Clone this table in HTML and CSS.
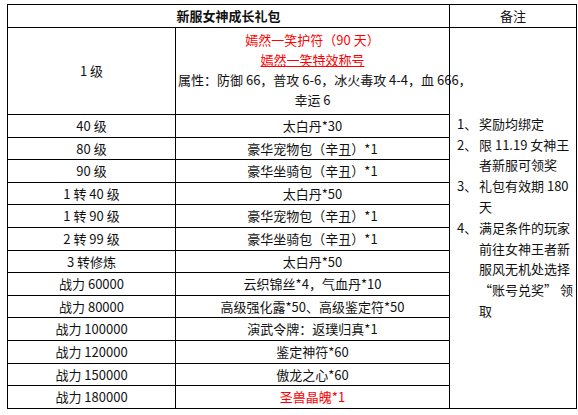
FILE: index.html
```html
<!DOCTYPE html>
<html lang="zh">
<head>
<meta charset="utf-8">
<link rel="stylesheet" href="styles.css">
</head>
<body>
<table class="gift">
  <colgroup>
    <col class="c1"><col class="c2"><col class="c3">
  </colgroup>
  <tr class="head">
    <th colspan="2" class="title">新服女神成长礼包</th>
    <th class="note-head">备注</th>
  </tr>
  <tr>
    <td>1 级</td>
    <td class="multi">
      <div class="red">嫣然一笑护符（90 天）</div>
      <div class="red ul">嫣然一笑特效称号</div>
      <div class="nw">属性：防御 66，普攻 6-6，冰火毒攻 4-4，血 666，</div>
      <div>幸运 6</div>
    </td>
    <td rowspan="15" class="notes">
      <div class="item"><span class="num">1、</span><span class="txt">奖励均绑定</span></div>
      <div class="item"><span class="num">2、</span><span class="txt">限 11.19 女神王<br>者新服可领奖</span></div>
      <div class="item"><span class="num">3、</span><span class="txt">礼包有效期 180<br>天</span></div>
      <div class="item"><span class="num">4、</span><span class="txt">满足条件的玩家<br>前往女神王者新<br>服风无机处选择<br>“账号兑奖” 领<br>取</span></div>
    </td>
  </tr>
  <tr><td>40 级</td><td>太白丹*30</td></tr>
  <tr><td>80 级</td><td>豪华宠物包（辛丑）*1</td></tr>
  <tr><td>90 级</td><td>豪华坐骑包（辛丑）*1</td></tr>
  <tr><td>1 转 40 级</td><td>太白丹*50</td></tr>
  <tr><td>1 转 90 级</td><td>豪华宠物包（辛丑）*1</td></tr>
  <tr><td>2 转 99 级</td><td>豪华坐骑包（辛丑）*1</td></tr>
  <tr><td>3 转修炼</td><td>太白丹*50</td></tr>
  <tr><td>战力 60000</td><td>云织锦丝*4，气血丹*10</td></tr>
  <tr><td>战力 80000</td><td>高级强化露*50、高级鉴定符*50</td></tr>
  <tr><td>战力 100000</td><td>演武令牌：返璞归真*1</td></tr>
  <tr><td>战力 120000</td><td>鉴定神符*60</td></tr>
  <tr><td>战力 150000</td><td>傲龙之心*60</td></tr>
  <tr><td>战力 180000</td><td class="red">圣兽晶魄*1</td></tr>
</table>
</body>
</html>
```
FILE: styles.css
```css
html, body {
  margin: 0;
  padding: 0;
  background: #fff;
}
body {
  font-family: "Noto Sans CJK SC", "Noto Sans", sans-serif;
  font-size: 13px;
  color: #111;
}
.gift {
  border-collapse: collapse;
  table-layout: fixed;
  width: 569px;
  margin: 4px 0 0 7px;
}
.c1 { width: 168px; }
.c2 { width: 274px; }
.c3 { width: 127px; }
.gift th, .gift td {
  border: 1px solid #000;
  text-align: center;
  vertical-align: middle;
  line-height: 21.6px;
  padding: 0 6px;
  font-weight: normal;
}
.gift th.title {
  font-weight: bold;
}
.gift th {
  height: 22px;
}
.multi div {
  line-height: 20px;
}
.multi {
  padding-top: 2px !important;
  padding-bottom: 4px !important;
}
.nw { white-space: nowrap; margin: 0 -4px; }
.red { color: #ff0000; }
.ul { text-decoration: underline; }
.gift td.notes {
  text-align: left;
  padding: 0 4px 0 7px;
}
.item {
  display: flex;
  line-height: 20.8px;
}
.num {
  flex: 0 0 22px;
  white-space: nowrap;
}
.txt {
  white-space: nowrap;
}
```
